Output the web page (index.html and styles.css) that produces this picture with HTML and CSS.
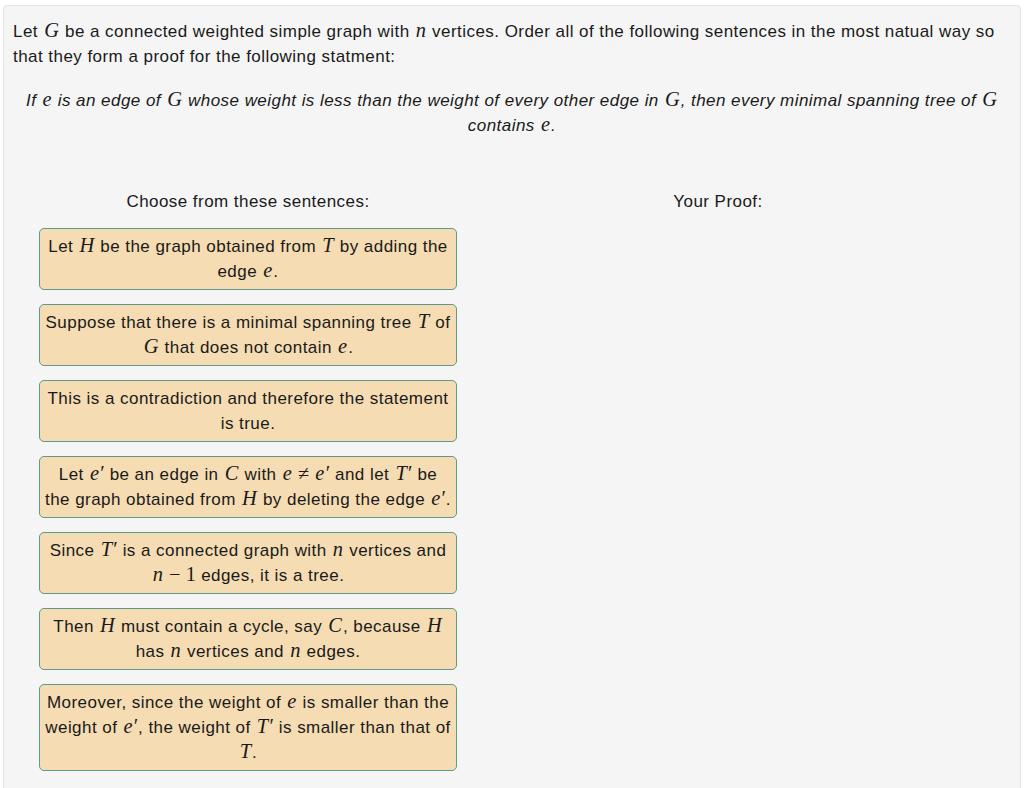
FILE: index.html
```html
<!DOCTYPE html>
<html lang="en">
<head>
    <meta charset="UTF-8">
    <title>Proof ordering</title>
    <link rel="stylesheet" href="styles.css">
</head>
<body>
    <div class="panel">
        <p class="intro">Let <i class="m">G</i> be a connected weighted simple graph with <i class="m">n</i> vertices. Order all of the following sentences in the most natual way so that they form a proof for the following statment:</p>
        <p class="statement">If <i class="m">e</i> is an edge of <i class="m">G</i> whose weight is less than the weight of every other edge in <i class="m">G</i>, then every minimal spanning tree of <i class="m">G</i> contains <i class="m">e</i>.</p>
        <div class="columns">
            <section class="col source">
                <header>Choose from these sentences:</header>
                <div class="card">Let <i class="m">H</i> be the graph obtained from <i class="m">T</i> by adding the edge <i class="m">e</i>.</div>
                <div class="card">Suppose that there is a minimal spanning tree <i class="m">T</i> of <i class="m">G</i> that does not contain <i class="m">e</i>.</div>
                <div class="card">This is a contradiction and therefore the statement is true.</div>
                <div class="card">Let <i class="m">e′</i> be an edge in <i class="m">C</i> with <i class="m">e</i> <span class="op">≠</span> <i class="m">e′</i> and let <i class="m">T′</i> be the graph obtained from <i class="m">H</i> by deleting the edge <i class="m">e′</i>.</div>
                <div class="card">Since <i class="m">T′</i> is a connected graph with <i class="m">n</i> vertices and <i class="m">n</i> <span class="op">−</span> <span class="op">1</span> edges, it is a tree.</div>
                <div class="card">Then <i class="m">H</i> must contain a cycle, say <i class="m">C</i>, because <i class="m">H</i> has <i class="m">n</i> vertices and <i class="m">n</i> edges.</div>
                <div class="card">Moreover, since the weight of <i class="m">e</i> is smaller than the weight of <i class="m">e′</i>, the weight of <i class="m">T′</i> is smaller than that of <i class="m">T</i>.</div>
            </section>
            <section class="col target">
                <header>Your Proof:</header>
            </section>
        </div>
    </div>
</body>
</html>
```

FILE: styles.css
```css
body {
    margin: 0px;
    padding: 5px 3px 0px 3px;
    background-color: white;
    font-family: "Liberation Sans", Arial, sans-serif;
    font-size: 17px;
    letter-spacing: 0.45px;
    line-height: 25px;
    color: #1a1a1a;
}
.panel {
    background-color: #f5f5f5;
    border: 1px solid #e3e3e3;
    border-radius: 4px;
    padding: 13px 9px 40px 9px;
    min-height: 800px;
}
p {
    margin: 0px;
}
.statement {
    font-style: italic;
    text-align: center;
    margin: 19px 10px 0px;
}
.m {
    font-family: "Liberation Serif", "Times New Roman", serif;
    font-style: italic;
    font-size: 1.2em;
    line-height: 1;
    letter-spacing: 0px;
    padding: 0px 1px;
}
.op {
    font-family: "Liberation Serif", "Times New Roman", serif;
    font-size: 1.2em;
    line-height: 1;
    letter-spacing: 0px;
}
.columns {
    display: flex;
    margin-top: 51px;
}
.col {
    width: 470px;
    display: flex;
    flex-direction: column;
    align-items: center;
}
.col header {
    margin-bottom: 14px;
}
.card {
    width: 406px;
    background-color: #f5dcb3;
    border: 1px solid #5e9a8b;
    border-radius: 5px;
    padding: 5px 5px;
    text-align: center;
    margin-bottom: 14px;
}
```
